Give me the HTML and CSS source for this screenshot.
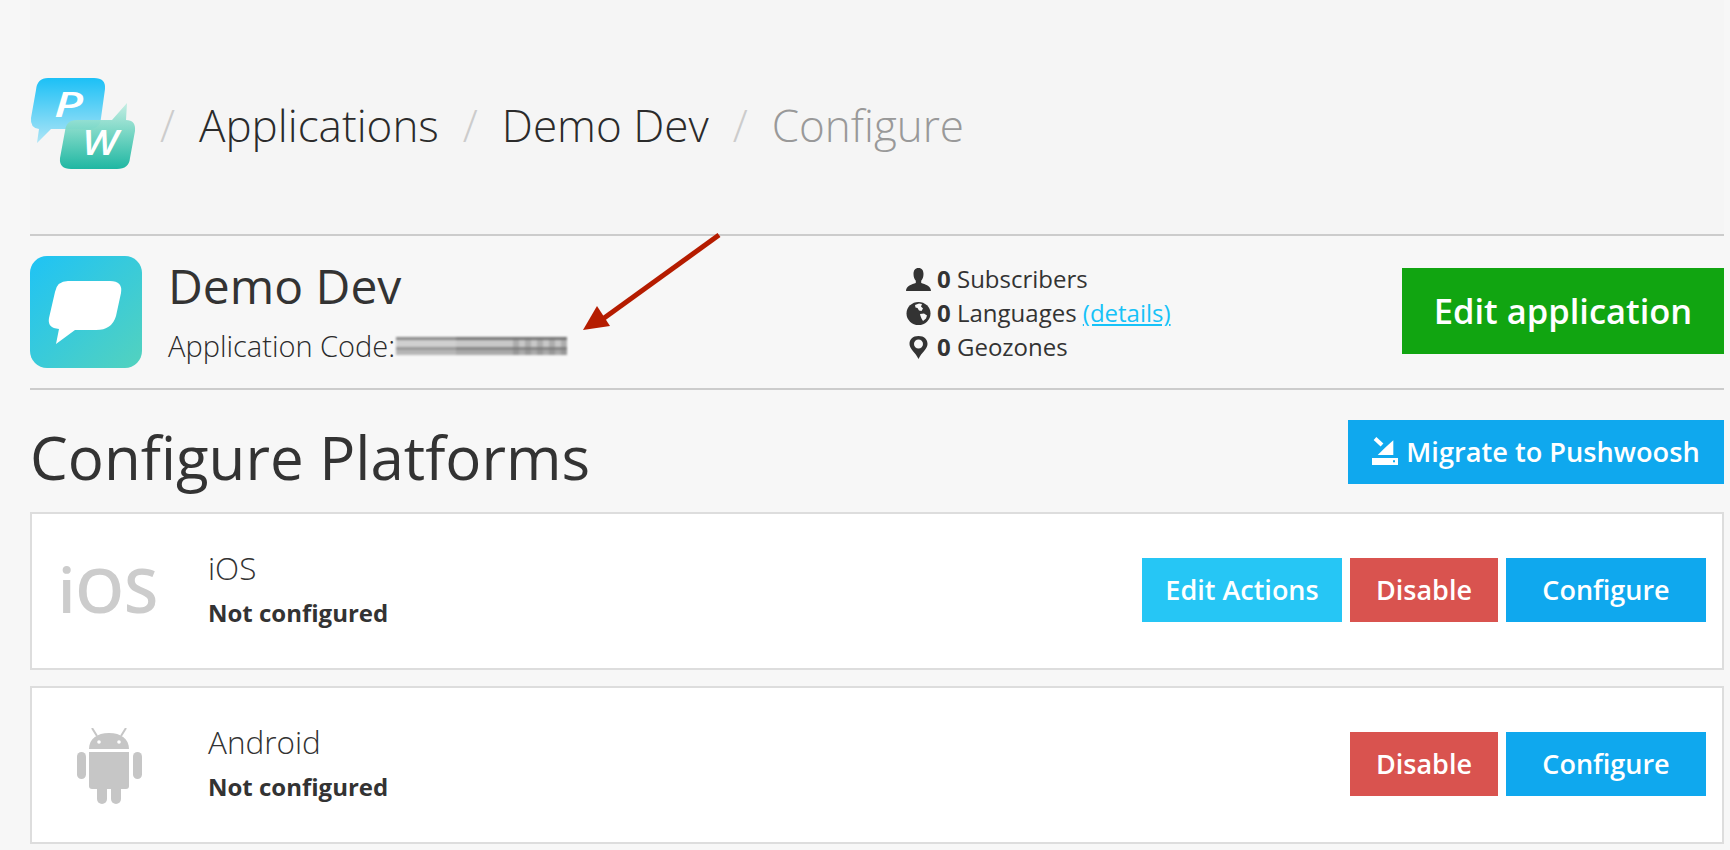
FILE: index.html
```html
<!DOCTYPE html>
<html lang="en">
<head>
<meta charset="utf-8">
<title>Configure</title>
<link rel="stylesheet" href="styles.css">
</head>
<body>
<div class="page">
  <header class="crumbs">
    <svg class="logo" viewBox="0 0 106 92" aria-hidden="true">
      <defs>
        <linearGradient id="lp" x1="0" y1="0" x2="0" y2="1"><stop offset="0" stop-color="#1cc0f6"/><stop offset="1" stop-color="#aee5f6"/></linearGradient>
        <linearGradient id="lw" x1="0" y1="0" x2="0" y2="1"><stop offset="0" stop-color="#c2ede2"/><stop offset=".45" stop-color="#72d5c2"/><stop offset="1" stop-color="#12b39d"/></linearGradient>
        <linearGradient id="ai" x1="0" y1="0" x2="1" y2="1"><stop offset="0" stop-color="#1fc3f5"/><stop offset="1" stop-color="#53d2be"/></linearGradient>
      </defs>
      <path fill="url(#lp)" d="M18 0H64Q76 0 75 11L71 40Q70 51 59 51H21L7 65 9 51Q0 50 1 40L6 12Q7 0 18 0Z"/>
      <path fill="url(#lw)" opacity=".94" d="M47 42H82L97 25 96 42Q106 42 105 53L100 80Q99 91 87 91H41Q29 91 30 80L35 53Q36 42 47 42Z"/>
      <text class="logo-p" x="24" y="39" textLength="29" lengthAdjust="spacingAndGlyphs">P</text>
      <text class="logo-w" x="52" y="77" textLength="36" lengthAdjust="spacingAndGlyphs">W</text>
    </svg>
    <span class="sep">/</span>
    <a class="crumb">Applications</a>
    <span class="sep">/</span>
    <a class="crumb">Demo Dev</a>
    <span class="sep">/</span>
    <span class="crumb active">Configure</span>
  </header>

  <section class="app-row">
    <div class="app-main">
      <svg class="app-icon" viewBox="0 0 112 112" aria-hidden="true">
        <rect width="112" height="112" rx="17" fill="url(#ai)"/>
        <path fill="#fff" d="M38 25H80Q93 25 91 37L86 60Q82 74 66 74H45L26 88 29 73Q17 72 19 62L25 36Q27 25 38 25Z"/>
      </svg>
      <div class="app-text">
        <h2 class="app-name">Demo Dev</h2>
        <p class="app-code"><span>Application Code:</span><span class="blurred"></span></p>
      </div>
    </div>
    <ul class="stats">
      <li>
        <svg class="stat-icon" viewBox="0 0 25 23" aria-hidden="true"><path fill="#333" d="M12.500 0C9 0 7.500 2.600 7.500 6c0 3 1 5.400 2.300 6.800v2.200C6 16.500 0 17.500 0 23h25c0-5.500-6-6.500-9.800-8v-2.200C16.500 11.400 17.500 9 17.500 6c0-3.400-1.500-6-5-6Z"/></svg>
        <span><b>0</b> Subscribers</span>
      </li>
      <li>
        <svg class="stat-icon" viewBox="0 0 25 23" aria-hidden="true"><ellipse cx="12.500" cy="11.500" rx="12" ry="11.500" fill="#333"/><path fill="#f7f7f7" d="M9 3l4-1.500 3 .5-1 2.500 2 2-1.500 2.500-2.500-.5-1.500-2.500-2-.5zM14 12l4-.5 3 2-1 3-3 2.500-1.500-2.500-1-2.500z"/></svg>
        <span><b>0</b> Languages <a class="details">(details)</a></span>
      </li>
      <li>
        <svg class="stat-icon" viewBox="0 0 25 23" aria-hidden="true"><path fill="#333" fill-rule="evenodd" d="M12.500 0C6.700 0 3.500 3.500 3.500 8c0 5 6 8.500 9 15 3-6.500 9-10 9-15 0-4.500-3.200-8-9-8Zm0 3.500a4.500 4.500 0 1 1 0 9 4.500 4.500 0 0 1 0-9Z"/></svg>
        <span><b>0</b> Geozones</span>
      </li>
    </ul>
    <a class="btn btn-edit">Edit application</a>
  </section>

  <section class="section-head">
    <h1 class="title">Configure Platforms</h1>
    <a class="btn btn-migrate">
      <svg class="migrate-icon" viewBox="0 0 26 28" aria-hidden="true"><path fill="#fff" fill-rule="evenodd" d="M0 21h26v7H0Zm21 2.200v2h2v-2Z"/><path fill="#fff" d="M21.300 3.300V18H5.700l5.300-5.300 2.300-2.300Z"/><path stroke="#fff" stroke-width="4" d="M3 1.500l7 6.500"/></svg>
      <span>Migrate to Pushwoosh</span>
    </a>
  </section>

  <section class="card">
    <div class="platform-logo"><span class="ios-mark">iOS</span></div>
    <div class="platform-text">
      <div class="platform-name">iOS</div>
      <div class="platform-state">Not configured</div>
    </div>
    <div class="actions">
      <a class="btn btn-sm btn-actions">Edit Actions</a>
      <a class="btn btn-sm btn-disable">Disable</a>
      <a class="btn btn-sm btn-config">Configure</a>
    </div>
  </section>

  <section class="card">
    <div class="platform-logo">
      <svg class="android" viewBox="0 0 65 76" aria-hidden="true">
        <g fill="#c6c6c6">
          <path d="M12 21C12 11 20 5 32 5s20 6 20 16Z"/>
          <path d="M12 24H52V58Q52 61 49 61H15Q12 61 12 58Z"/>
          <rect x="0" y="24" width="9" height="27" rx="4.500"/>
          <rect x="56" y="24" width="9" height="27" rx="4.500"/>
          <rect x="20" y="50" width="10" height="26" rx="5"/>
          <rect x="34" y="50" width="10" height="26" rx="5"/>
        </g>
        <path stroke="#c6c6c6" stroke-width="2" d="M20 8L15 0M44 8L49 0"/>
        <circle cx="22" cy="14" r="1.800" fill="#fff"/><circle cx="42" cy="14" r="1.800" fill="#fff"/>
      </svg>
    </div>
    <div class="platform-text">
      <div class="platform-name">Android</div>
      <div class="platform-state">Not configured</div>
    </div>
    <div class="actions">
      <a class="btn btn-sm btn-disable">Disable</a>
      <a class="btn btn-sm btn-config">Configure</a>
    </div>
  </section>

  <svg class="arrow" viewBox="0 0 140 100" aria-hidden="true">
    <path stroke="#b51c00" stroke-width="5" d="M137 2L18 88"/>
    <path fill="#b51c00" d="M1 97L15 73 28 93Z"/>
  </svg>
</div>
</body>
</html>
```
FILE: styles.css
```css
* { box-sizing: border-box; }
html, body { margin: 0; padding: 0; }
body {
  background: #f7f7f7;
  color: #333;
  font-family: "Open Sans", "Liberation Sans", sans-serif;
  height: 850px;
  overflow: hidden;
}
.page { position: relative; margin: 0 6px 0 30px; }

/* breadcrumb */
.crumbs {
  height: 234px;
  background: #f5f5f5;
  display: flex;
  align-items: center;
  padding-top: 16px;
  font-size: 44px;
  font-weight: 300;
  color: #2b2b2b;
}
.logo { width: 106px; height: 92px; flex: none; margin-top: -2px; }
.logo-p { font: italic 600 34px "Open Sans", sans-serif; fill: #fff; }
.logo-w { font: italic 600 34px "Open Sans", sans-serif; fill: #fff; }
.sep { color: #ccc; width: 63px; text-align: center; flex: none; }
.crumb { white-space: nowrap; }
.crumb.active { color: #999; }

/* application row */
.app-row {
  height: 156px;
  border-top: 2px solid #ccc;
  border-bottom: 2px solid #ccc;
  display: flex;
  align-items: center;
}
.app-main { display: flex; align-items: center; width: 876px; flex: none; }
.app-icon { width: 112px; height: 112px; flex: none; }
.app-text { margin-left: 26px; }
.app-name { margin: -6px 0 0; font-size: 48px; font-weight: 400; line-height: 62px; color: #333; }
.app-code { margin: 12px 0 0; font-size: 29px; font-weight: 300; line-height: 34px; color: #2b2b2b; display: flex; align-items: center; }
.blurred {
  display: inline-block;
  width: 171px;
  height: 18px;
  margin-left: 1px;
  filter: blur(1.200px);
  background:
    repeating-linear-gradient(90deg, transparent 0 6px, rgba(110,110,110,.3) 6px 12px) right / 35% 100% no-repeat,
    linear-gradient(90deg, rgba(255,255,255,.15) 0 35%, transparent 35% 100%),
    linear-gradient(180deg, #777 0 18%, #c8c8c8 18% 55%, #888 55% 72%, #aaa 72% 100%);
}
.stats { list-style: none; margin: 2px 0 0; padding: 0; width: 496px; flex: none; font-size: 24px; font-weight: 400; line-height: 34px; color: #333; }
.stats li { display: flex; align-items: center; }
.stats b { font-weight: 700; }
.stat-icon { width: 25px; height: 23px; flex: none; margin-right: 6px; }
.details { color: #16c2f8; text-decoration: underline; }

/* buttons */
.btn { display: flex; align-items: center; justify-content: center; color: #fff; white-space: nowrap; padding-bottom: 2px; }
.btn-edit { width: 322px; height: 86px; margin-top: -2px; background: #11a511; font-size: 34.500px; font-weight: 600; flex: none; }
.btn-migrate { width: 376px; height: 64px; background: #0fa8ee; font-size: 27.200px; font-weight: 600; gap: 8px; }
.migrate-icon { width: 26px; height: 28px; flex: none; }
.btn-sm { height: 64px; font-size: 27px; font-weight: 600; }
.btn-actions { width: 200px; background: #26c6f5; }
.btn-disable { width: 148px; background: #d9534f; }
.btn-config { width: 200px; background: #0fa8ee; }

/* section heading */
.section-head { height: 122px; display: flex; align-items: flex-start; justify-content: space-between; padding-top: 30px; }
.title { margin: -4px 0 0; font-size: 60px; font-weight: 400; line-height: 82px; color: #333; }

/* platform cards */
.card {
  height: 158px;
  margin-bottom: 16px;
  background: #fff;
  border: 2px solid #ddd;
  display: flex;
  align-items: center;
  padding-right: 16px;
}
.platform-logo { width: 176px; flex: none; display: flex; align-items: center; justify-content: center; padding-right: 24px; }
.ios-mark { font-size: 62px; line-height: 68px; color: #ccc; font-weight: 600; margin-top: -5px; }
.android { width: 65px; height: 76px; margin: 2px 0 0 2px; }
.platform-text { padding-bottom: 3px; }
.platform-name { font-size: 31.500px; font-weight: 300; line-height: 38px; color: #333; }
.platform-state { font-size: 24px; font-weight: 700; line-height: 34px; margin-top: 9px; color: #333; }
.actions { margin-left: auto; margin-top: -2px; display: flex; gap: 8px; }

/* annotation over the page */
.arrow { position: absolute; left: 552px; top: 233px; width: 140px; height: 100px; }
```
